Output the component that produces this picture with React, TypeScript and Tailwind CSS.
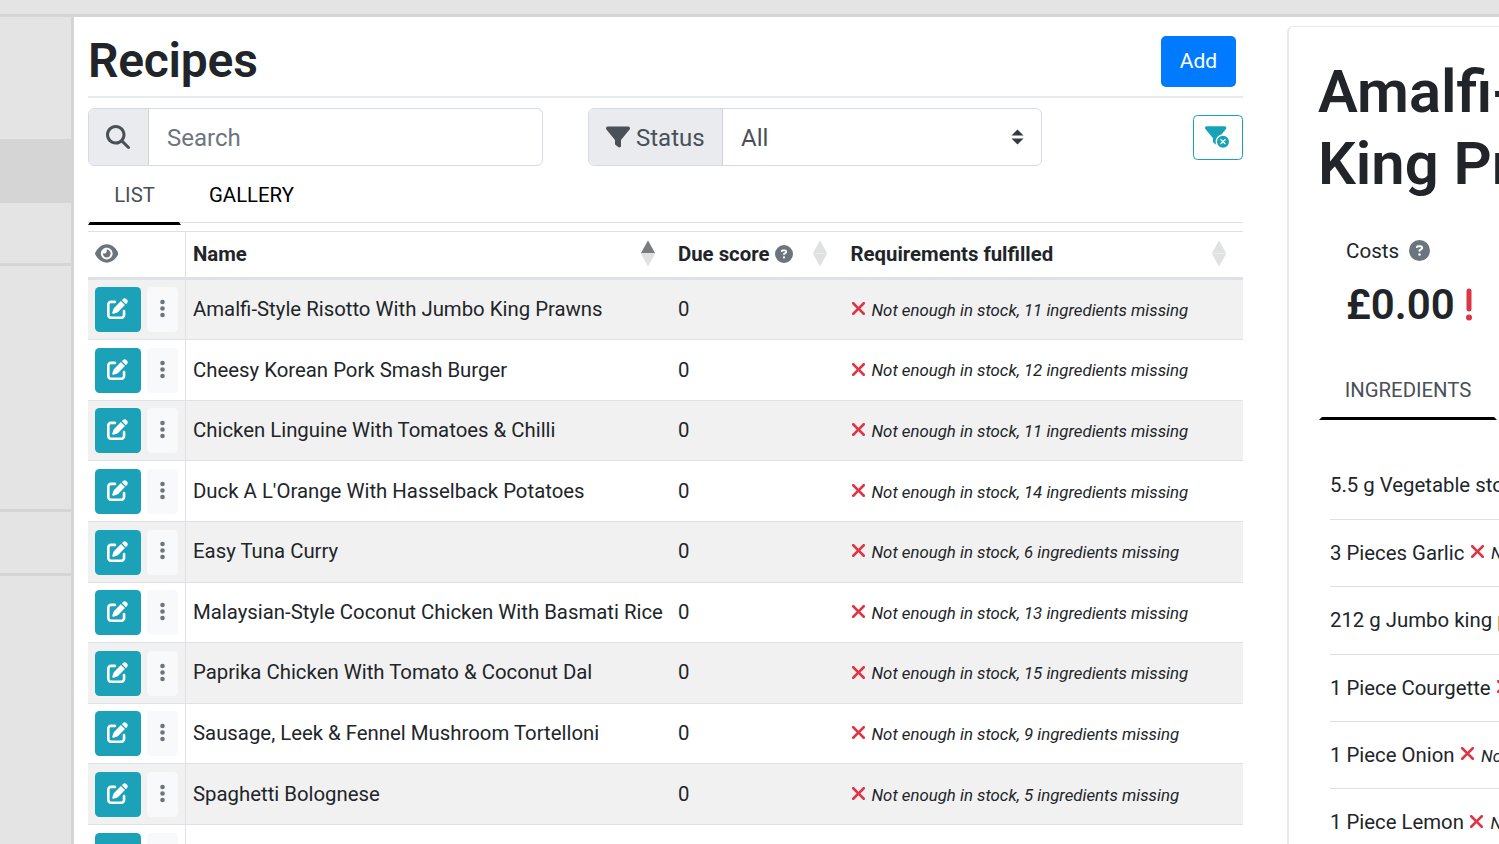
import type { ReactNode } from "react";
import {
  FaCircleQuestion,
  FaEllipsisVertical,
  FaFilter,
  FaFilterCircleXmark,
  FaMagnifyingGlass,
  FaXmark,
} from "react-icons/fa6";

const recipes = [
  { name: "Amalfi-Style Risotto With Jumbo King Prawns", missing: 11 },
  { name: "Cheesy Korean Pork Smash Burger", missing: 12 },
  { name: "Chicken Linguine With Tomatoes & Chilli", missing: 11 },
  { name: "Duck A L'Orange With Hasselback Potatoes", missing: 14 },
  { name: "Easy Tuna Curry", missing: 6 },
  { name: "Malaysian-Style Coconut Chicken With Basmati Rice", missing: 13 },
  { name: "Paprika Chicken With Tomato & Coconut Dal", missing: 15 },
  { name: "Sausage, Leek & Fennel Mushroom Tortelloni", missing: 9 },
  { name: "Spaghetti Bolognese", missing: 5 },
];

const ingredients = [
  { label: "5.5 g Vegetable stock", missing: false },
  { label: "3 Pieces Garlic", missing: true },
  { label: "212 g Jumbo king prawns", missing: false },
  { label: "1 Piece Courgette", missing: true },
  { label: "1 Piece Onion", missing: true },
  { label: "1 Piece Lemon", missing: true },
];

const columns = "grid grid-cols-[98px_485px_172.5px_1fr]";

function EditIcon() {
  return (
    <svg width="21" height="21" viewBox="0 0 512 512" fill="currentColor">
      <path d="M490.3 40.4C512.2 62.27 512.2 97.73 490.3 119.6L460.3 149.7L362.3 51.72L392.4 21.66C414.3-.2135 449.8-.2135 471.7 21.66L490.3 40.4zM172.4 241.7L339.7 74.34L437.7 172.3L270.3 339.6C264.2 345.8 256.7 350.4 248.4 353.2L159.6 382.8C150.1 385.6 141.5 383.4 135 376.1C128.6 370.5 126.4 361 129.2 352.4L158.8 263.6C161.6 255.3 166.2 247.8 172.4 241.7V241.7zM192 63.1C209.7 63.1 224 78.33 224 95.1C224 113.7 209.7 127.1 192 127.1H96C78.33 127.1 64 142.3 64 159.1V416C64 433.7 78.33 448 96 448H352C369.7 448 384 433.7 384 416V319.1C384 302.3 398.3 287.1 416 287.1C433.7 287.1 448 302.3 448 319.1V416C448 469 405 512 352 512H96C42.98 512 0 469 0 416V159.1C0 106.1 42.98 63.1 96 63.1H192z" />
    </svg>
  );
}

function EyeIcon() {
  return (
    <svg width="23.5" height="21" viewBox="0 0 576 512" fill="currentColor">
      <path d="M279.6 160.4C282.4 160.1 285.2 160 288 160C341 160 384 202.1 384 256C384 309 341 352 288 352C234.1 352 192 309 192 256C192 253.2 192.1 250.4 192.4 247.6C201.7 252.9 212.5 256 224 256C259.3 256 288 227.3 288 192C288 180.5 284.9 169.7 279.6 160.4zM480.6 112.6C527.4 156 558.7 207.1 573.5 243.7C576.8 251.6 576.8 260.4 573.5 268.3C558.7 304 527.4 355.1 480.6 399.4C433.5 443.2 368.8 480 288 480C207.2 480 142.5 443.2 95.42 399.4C48.62 355.1 17.34 304 2.461 268.3C-.8205 260.4-.8205 251.6 2.461 243.7C17.34 207.1 48.62 156 95.42 112.6C142.5 68.84 207.2 32 288 32C368.8 32 433.5 68.84 480.6 112.6V112.6zM288 112C208.5 112 144 176.5 144 256C144 335.5 208.5 400 288 400C367.5 400 432 335.5 432 256C432 176.5 367.5 112 288 112z" />
    </svg>
  );
}

function Sort({ active = false }: { active?: boolean }) {
  return (
    <svg width="16" height="27" viewBox="0 0 16 27" className="mb-[1.5px] shrink-0">
      <path d="M8 0.5L15.2 13.2H0.8Z" fill={active ? "#7b7c7e" : "#e0e1e1"} />
      <path d="M8 26.5L15.2 13.6H0.8Z" fill="#e0e1e1" />
    </svg>
  );
}

function Actions() {
  return (
    <div className="flex h-full items-center gap-[6px] border-r border-[#dee2e6] pl-[6.5px] pt-[0.5px]">
      <div className="flex h-[45px] w-[46.5px] items-center justify-center rounded-[4.5px] bg-[#1ba2b8] pb-[2px] text-white">
        <EditIcon />
      </div>
      <div className="flex h-[45px] w-[31px] items-center justify-center rounded-[4.5px] bg-[#f8f9fa] pb-[2.5px] pr-px text-[#6c757d]">
        <FaEllipsisVertical size={21} />
      </div>
    </div>
  );
}

function Row({ odd, children }: { odd: boolean; children: ReactNode }) {
  return (
    <div
      className={`${columns} h-[60.6px] shrink-0 items-center border-b border-[#dee2e6] ${
        odd ? "bg-[#f1f1f1]" : "bg-white"
      }`}
    >
      {children}
    </div>
  );
}

function Sidebar() {
  return (
    <aside className="flex w-[74px] shrink-0 flex-col border-r-[3px] border-[#d5d5d5] bg-[#e4e4e4]">
      <div className="h-[122px]" />
      <div className="h-[64px] bg-[#d5d5d5]" />
      <div className="h-[62.5px] border-b-[3px] border-[#d5d5d5]" />
      <div className="h-[246.5px] border-b-[3px] border-[#d5d5d5]" />
      <div className="h-[63.5px] border-b-[3px] border-[#d5d5d5]" />
    </aside>
  );
}

function Toolbar() {
  return (
    <div className="mt-[10px] flex h-[58.5px] text-[24px] text-[#495057]">
      <div className="flex h-[57.5px] w-[455px] overflow-hidden rounded-[6px] border border-[#d5dbe1]">
        <div className="flex w-[60px] shrink-0 items-center justify-center border-r border-[#ced4da] bg-[#e9ebef] pr-px">
          <FaMagnifyingGlass size={24} />
        </div>
        <span className="self-center pl-[18px] pt-[2px] text-[#6c757d]">Search</span>
      </div>
      <div className="ml-[44.5px] flex h-[57.5px] w-[454.5px] overflow-hidden rounded-[6px] border border-[#d5dbe1]">
        <div className="flex w-[134.5px] shrink-0 items-center border-r border-[#ced4da] bg-[#e9ebef] pl-[17.5px]">
          <FaFilter size={24} />
          <span className="pl-[6px] pt-[2px]">Status</span>
        </div>
        <span className="flex-1 self-center pl-[18px] pt-[2px]">All</span>
        <svg width="13" height="16" viewBox="0 0 13 16" className="mr-[17px] mt-px self-center" fill="#343a40">
          <path d="M6.5 0.5L12.5 6.6H0.5Z" />
          <path d="M6.5 15.5L12.5 9.4H0.5Z" />
        </svg>
      </div>
      <div className="ml-auto mt-[6.5px] flex h-[45px] w-[50px] items-center justify-center rounded-[4.5px] border border-[#17a2b8] pr-[1.5px] text-[#17a2b8]">
        <FaFilterCircleXmark size={24} />
      </div>
    </div>
  );
}

function RecipeTable() {
  return (
    <div className="mt-[8.3px] flex flex-col border-t border-[#dee2e6] text-[20.35px] text-[#212529]">
      <div className={`${columns} h-[47.6px] shrink-0 items-center border-b-[3px] border-[#dee2e6] font-bold`}>
        <div className="flex h-full items-center border-r border-[#dee2e6] pb-[2px] pl-[6.5px] text-[#6c757d]">
          <EyeIcon />
        </div>
        <div className="flex items-center justify-between pl-[7px] pr-[15px]">
          <span>Name</span>
          <Sort active />
        </div>
        <div className="flex items-center pl-[7px]">
          <span>Due score</span>
          <FaCircleQuestion size={18} className="ml-[5.5px] text-[#6c757d]" />
          <span className="ml-[19px]">
            <Sort />
          </span>
        </div>
        <div className="flex items-center justify-between pl-[7px] pr-[16px]">
          <span>Requirements fulfilled</span>
          <Sort />
        </div>
      </div>
      {recipes.map((recipe, index) => (
        <Row key={recipe.name} odd={index % 2 === 0}>
          <Actions />
          <span className="whitespace-nowrap pb-[0.6px] pl-[7px]">{recipe.name}</span>
          <span className="pb-[0.6px] pl-[7px]">0</span>
          <div className="flex items-center pl-[4px]">
            <FaXmark size={21} className="mb-[2px] text-[#dc3545]" />
            <span className="whitespace-nowrap pl-[3px] pt-[2px] text-[16.8px] italic">
              Not enough in stock, {recipe.missing} ingredients missing
            </span>
          </div>
        </Row>
      ))}
      <Row odd={false}>
        <Actions />
      </Row>
    </div>
  );
}

function RecipeCard() {
  return (
    <section className="ml-[44px] w-[500px] shrink-0 self-stretch pt-[9px]">
      <div className="flex h-[900px] flex-col rounded-[6px] border border-l-2 border-[#e8e8e8] pl-[30px] text-[#212529]">
        <h1 className="-ml-px mt-[29px] whitespace-nowrap text-[59.7px] font-semibold leading-[72px]">
          Amalfi-Style
          <br />
          King Prawns
        </h1>
        <div className="ml-[27px] mt-[35px] flex h-[32px] items-center text-[20.6px]">
          Costs
          <FaCircleQuestion size={21} className="mb-[2px] ml-[10px] text-[#6c757d]" />
        </div>
        <div className="ml-[27px] mt-[10px] flex h-[54px] items-center text-[42px] font-semibold">
          £0.00
          <svg width="6" height="33" viewBox="0 0 6 33" className="ml-[11px]" fill="#dc3545">
            <rect x="0.5" y="0.5" width="5" height="23" rx="2.5" />
            <circle cx="3" cy="29.5" r="3" />
          </svg>
        </div>
        <div className="mt-[33px] flex h-[56px] w-[178px] items-center justify-center border-x-[3px] border-b-[3px] border-x-transparent border-b-black text-[20.35px] text-[#495057]">
          INGREDIENTS
        </div>
        <div className="ml-[11px] mt-[32.5px] flex flex-col text-[20.35px]">
          {ingredients.map((item) => (
            <div
              key={item.label}
              className="flex h-[67.4px] shrink-0 items-center whitespace-nowrap border-b border-[#dfdfdf]"
            >
              {item.label}
              {item.missing && (
                <>
                  <FaXmark size={21} className="mb-[3px] ml-[2.5px] shrink-0 text-[#dc3545]" />
                  <span className="pl-[3px] pt-[2px] text-[16.8px] italic">Not enough in stock</span>
                </>
              )}
            </div>
          ))}
        </div>
      </div>
    </section>
  );
}

export default function App() {
  return (
    <div className="flex h-[844px] w-[1499px] flex-col overflow-hidden bg-white font-['Roboto',sans-serif]">
      <div className="h-[17px] shrink-0 border-b-[3px] border-[#d5d5d5] bg-[#e4e4e4]" />
      <div className="flex min-h-0 flex-1">
        <Sidebar />
        <main className="flex min-w-0 flex-1 overflow-hidden pl-[14px]">
          <section className="flex w-[1155px] shrink-0 flex-col">
            <header className="flex h-[81px] shrink-0 items-start justify-between border-b-2 border-[#e8eaec] pr-[7px]">
              <h2 className="mt-[15px] text-[48px] font-semibold leading-[58px] tracking-[-0.25px] text-[#212529]">
                Recipes
              </h2>
              <div className="mt-[18.5px] flex h-[51px] w-[75px] items-center justify-center rounded-[5px] bg-[#007bff] pt-px text-[21px] text-white">
                Add
              </div>
            </header>
            <Toolbar />
            <nav className="flex h-[57.3px] shrink-0 border-b border-[#dee2e6] text-[20.35px]">
              <div className="flex h-[59.8px] w-[93px] items-center justify-center border-x-2 border-b-[3px] border-x-transparent border-b-black pt-[2px] text-[#495057]">
                LIST
              </div>
              <div className="flex h-[59px] items-center pl-[28px] text-black">GALLERY</div>
            </nav>
            <RecipeTable />
          </section>
          <RecipeCard />
        </main>
      </div>
    </div>
  );
}
